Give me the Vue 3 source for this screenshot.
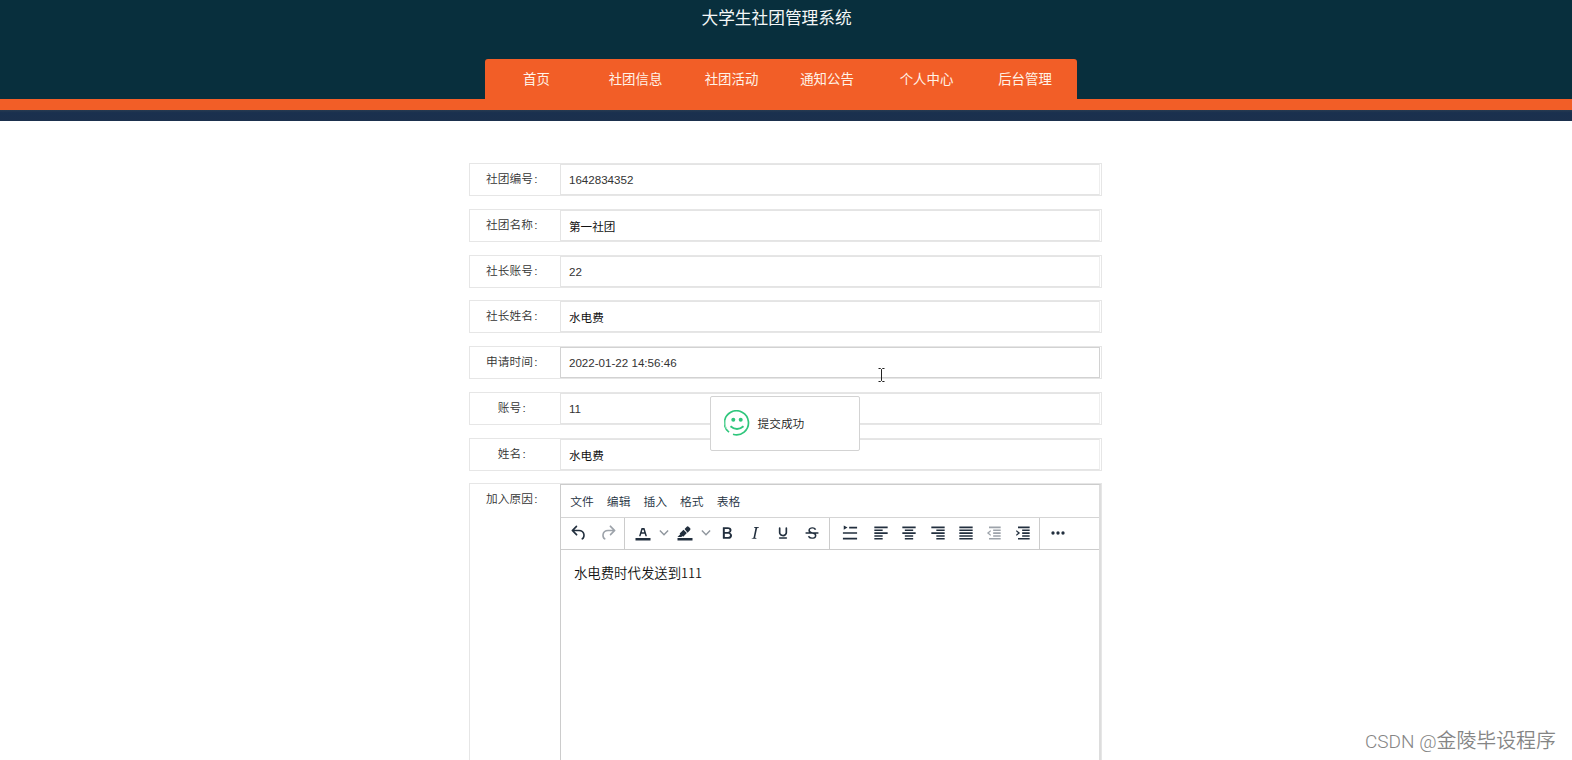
<script setup>
const nav = [
  { t: '首页', w: 103 },
  { t: '社团信息', w: 95 },
  { t: '社团活动', w: 97 },
  { t: '通知公告', w: 94 },
  { t: '个人中心', w: 105 },
  { t: '后台管理', w: 92 },
]
const rows = [
  { l: '社团编号', v: '1642834352' },
  { l: '社团名称', v: '第一社团', cjk: true },
  { l: '社长账号', v: '22' },
  { l: '社长姓名', v: '水电费', cjk: true },
  { l: '申请时间', v: '2022-01-22 14:56:46', hover: true },
  { l: '账号', v: '11' },
  { l: '姓名', v: '水电费', cjk: true },
]
const menus = ['文件', '编辑', '插入', '格式', '表格']
const chevron = 'M3.500 9l5 5 5-5'
const groups = [
  { w: 64, items: [
    { w: 29, d: 'M6.4 8H12c3.7 0 6.2 2 6.8 5.1.6 2.7-.4 5.6-2.3 6.8a1 1 0 01-1-1.8c1.1-.6 1.8-2.7 1.4-4.6-.5-2.1-2.1-3.5-4.9-3.5H6.4l3.3 3.3a1 1 0 11-1.4 1.4l-5-5a1 1 0 010-1.4l5-5a1 1 0 011.4 1.4L6.4 8z' },
    { w: 29, dim: true, d: 'M17.6 10H12c-2.8 0-4.4 1.4-4.9 3.5-.4 2 .3 4 1.4 4.6a1 1 0 11-1 1.8c-2-1.2-2.9-4.1-2.3-6.8.6-3 3-5.1 6.8-5.1h5.6l-3.3-3.3a1 1 0 111.4-1.4l5 5a1 1 0 010 1.4l-5 5a1 1 0 01-1.4-1.4l3.3-3.3z' },
  ] },
  { w: 205, items: [
    { w: 28, d: 'M3 18h18v3H3zM8.7 16h-.8a.5.5 0 01-.5-.6l2.7-9c.1-.3.3-.4.5-.4h2.8c.2 0 .4.1.5.4l2.7 9a.5.5 0 01-.5.6h-.8a.5.5 0 01-.4-.4l-.7-2.2c0-.3-.3-.4-.5-.4h-3.4c-.2 0-.4.1-.5.4l-.7 2.2c0 .3-.2.4-.4.4zm2.6-7.6l-.6 2a.5.5 0 00.5.6h1.6a.5.5 0 00.5-.6l-.6-2c0-.3-.3-.4-.5-.4h-.4c-.2 0-.4.1-.5.4z' },
    { w: 14, line: true, d: chevron },
    { w: 28, d: 'M3 18h18v3H3zM7.7 16.7H3l3.3-3.3-.7-.8L10.2 8l4 4.1-4 4.2c-.2.2-.6.2-.8 0l-.6-.7-1.1 1.1zm3.800-9.500L13.800 4.700a2 2 0 012.800 0L18 6c.7.7.7 2 0 2.7l-2.900 2.900z' },
    { w: 14, line: true, d: chevron },
    { w: 28, d: 'M7.8 19c-.3 0-.5 0-.6-.2l-.2-.5V5.7c0-.2 0-.4.2-.5l.6-.2h5c1.5 0 2.7.3 3.5 1 .7.6 1.1 1.4 1.1 2.5a3 3 0 01-.6 1.9c-.4.6-1 1-1.6 1.2.4.1.9.3 1.3.6s.8.7 1 1.2c.4.4.5 1 .5 1.6 0 1.3-.4 2.3-1.3 3-.8.7-2.1 1-3.8 1H7.8zm5-8.3c.6 0 1.2-.1 1.6-.5.4-.3.6-.7.6-1.3 0-1.1-.8-1.7-2.3-1.7H9.3v3.5h3.4zm.5 6c.7 0 1.3-.1 1.7-.4.4-.4.6-.9.6-1.5s-.2-1-.7-1.4c-.4-.3-1-.4-2-.4H9.4v3.8h4z' },
    { w: 28.4, d: 'M16.7 4.7l-.1.9h-.3c-.6 0-1 0-1.4.3-.3.3-.4.6-.5 1.1l-2.1 9.8v.6c0 .5.4.8 1.4.8h.2l-.2.8H8l.2-.8h.2c1.1 0 1.8-.5 2-1.5l2-9.8.1-.5c0-.6-.4-.8-1.4-.8h-.3l.2-.9h5.8z' },
    { w: 28.3, d: 'M16 5c.6 0 1 .4 1 1v5.5a4 4 0 01-.4 1.8l-1 1.4a5.3 5.3 0 01-5.5 1 5 5 0 01-1.6-1c-.5-.4-.8-.9-1.1-1.4a4 4 0 01-.4-1.8V6c0-.6.4-1 1-1s1 .4 1 1v5.5c0 .3 0 .6.2 1l.6.7a3.3 3.3 0 002.2.8 3.4 3.4 0 002.2-.8c.3-.2.4-.5.6-.8l.2-.9V6c0-.6.4-1 1-1zM8 17h8c.6 0 1 .4 1 1s-.4 1-1 1H8a1 1 0 010-2z' },
    { w: 28.3, solid: true, d: 'M15.6 8.5c-.5-.7-1-1.1-1.3-1.3-.6-.4-1.3-.6-2-.6-2.7 0-2.8 1.7-2.8 2.1 0 1.6 1.8 2 3.2 2.3 4.4.9 4.6 2.8 4.6 3.9 0 1.4-.7 4.1-5 4.1A6.2 6.2 0 017 16.4l1.5-1.1c.4.6 1.6 2 3.7 2 1.6 0 2.500-.4 3-1.2.4-.8.3-2-.8-2.6-.7-.4-1.6-.7-2.9-1-1-.2-3.9-.8-3.9-3.6C7.6 6 10.3 5 12.4 5c2.9 0 4.2 1.6 4.7 2.4l-1.5 1.1zM5 11h14a1 1 0 010 2H5a1 1 0 010-2z' },
  ] },
  { w: 210, items: [
    { w: 33, d: 'M3.500 11h17v2h-17zM3.500 17.800h17v2h-17zM11 4.500h9.500v2H11zM4.500 3l4.500 2.500-4.500 2.500z' },
    { w: 28.3, d: 'M4 4.200h16v2H4zM4 7.800h10v1.800H4zM4 11.200h16v2H4zM4 14.700h10v1.800H4zM4 18h10v1.800H4z' },
    { w: 28.3, d: 'M4 4.200h16v2H4zM7 7.800h10v1.800H7zM4 11.200h16v2H4zM7 14.700h10v1.800H7zM7 18h10v1.800H7z' },
    { w: 28.3, d: 'M4 4.200h16v2H4zM10 7.800h10v1.800H10zM4 11.200h16v2H4zM10 14.700h10v1.800H10zM10 18h10v1.800H10z' },
    { w: 28.3, d: 'M4 4.200h16v2H4zM4 7.800h16v1.800H4zM4 11.200h16v2H4zM4 14.700h16v1.800H4zM4 18h16v1.800H4z' },
    { w: 28.3, dim: true, d: 'M6 4.200h14v2H6zM11 7.800h9v1.800h-9zM11 11.200h9v2h-9zM11 14.700h9v1.800h-9zM6 18h14v1.800H6zM8 8.500v2L5.800 12 8 13.500v2L3.500 12z' },
    { w: 28.3, d: 'M6 4.200h14v2H6zM11 7.800h9v1.800h-9zM11 11.200h9v2h-9zM11 14.700h9v1.800h-9zM6 18h14v1.800H6zM4 8.500v2L6.200 12 4 13.500v2L8.500 12z' },
  ] },
  { w: 40, items: [
    { w: 28, d: 'M6 10a2 2 0 110 4 2 2 0 010-4zM12 10a2 2 0 110 4 2 2 0 010-4zM18 10a2 2 0 110 4 2 2 0 010-4z' },
  ] },
]
</script>

<template>
  <div class="page">
    <header>
      <h1>大学生社团管理系统</h1>
      <nav><a v-for="n in nav" :key="n.t" :style="{ width: n.w + 'px' }">{{ n.t }}</a></nav>
    </header>
    <div class="bar"></div>
    <div class="banner"></div>
    <main>
      <div v-for="r in rows" :key="r.l" class="row">
        <label>{{ r.l }}<i>:</i></label>
        <div class="input" :class="{ hover: r.hover, cjk: r.cjk }">{{ r.v }}</div>
      </div>
      <div class="row tall">
        <label>加入原因<i>:</i></label>
        <div class="editor">
          <div class="menubar"><span v-for="m in menus" :key="m">{{ m }}</span></div>
          <div class="toolbar">
            <div v-for="(g, i) in groups" :key="i" class="group" :style="{ width: g.w + 'px' }">
              <span v-for="(b, j) in g.items" :key="j" class="btn" :style="{ width: b.w + 'px' }">
                <svg :viewBox="b.line ? '0 0 17 24' : '0 0 24 24'" :class="{ dim: b.dim, line: b.line }"><path :d="b.d" :fill-rule="b.solid ? 'nonzero' : 'evenodd'" /></svg>
              </span>
            </div>
          </div>
          <div class="content">水电费时代发送到<span>111</span></div>
        </div>
      </div>
    </main>
    <div class="toast">
      <svg viewBox="0 0 26 26">
        <path d="M5 22.200A12 12 0 1 1 9 24.300" fill="none" stroke="#2fc67c" stroke-width="1.700" />
        <path d="M2.500 19A12 12 0 0 1 1.300 10" fill="none" stroke="#a5e6c5" stroke-width="1" />
        <circle cx="9.300" cy="9.700" r="2" /><circle cx="16.700" cy="9.700" r="2" />
        <path d="M6.500 16.300Q13 21.800 19.500 16.300" fill="none" stroke="#2fc67c" stroke-width="1.800" />
      </svg>
      <span>提交成功</span>
    </div>
    <svg class="cursor" viewBox="0 0 7 14"><path d="M.5 .5H2.500L3.500 1.500 4.500 .5H6.500M3.500 1.500V12.500M.5 13.500H2.500L3.500 12.500 4.500 13.500H6.500" fill="none" stroke="#222" /></svg>
    <div class="mark">CSDN @<span>金陵毕设程序</span></div>
  </div>
</template>

<style>
body { background: #fff; overflow: hidden; }
</style>
<style scoped>
.page { position: relative; width: 1572px; height: 760px; overflow: hidden; background: #fff; font-family: "Liberation Sans", "Noto Sans CJK SC", sans-serif; font-weight: 350; }
header { height: 99px; background: #082f3d; display: flex; flex-direction: column; justify-content: space-between; }
h1 { margin: 0; padding-left: 701.500px; font-size: 16.7px; font-weight: 400; line-height: 38px; color: #f4f7f7; }
nav { margin-left: 485px; width: 592px; height: 40px; box-sizing: border-box; background: #f25e27; border-radius: 3px 3px 0 0; display: flex; }
nav a { color: #fff3e8; font-size: 13.4px; font-weight: 400; line-height: 41px; text-align: center; }
.bar { height: 11px; background: #f25e27; }
.banner { height: 11px; background: linear-gradient(#273a50, #1a304e 25%, #1b304d); }
main { padding: 42px 0 0 469px; }
.row { width: 632.500px; height: 33px; box-sizing: border-box; margin-bottom: 12.750px; border: 1px solid #e6e6e6; display: flex; justify-content: space-between; }
label { width: 90px; box-sizing: border-box; padding-right: 5px; text-align: center; font-size: 11.7px; line-height: 30px; color: #333; }
label i { display: inline-block; width: 6px; font-style: normal; text-align: center; }
.input { width: 540px; box-sizing: border-box; border: 1px solid #e4e4e4; border-right-color: #eee; margin-right: 1px; padding-left: 8px; font-size: 11.6px; line-height: 29px; color: #333; }
.input.cjk { color: #111; font-weight: 400; line-height: 31px; }
.input.hover { border-color: #d2d2d2; }
.row.tall { height: 340px; }
.editor { width: 541px; box-sizing: border-box; border: 1px solid #ccc; border-right-width: 2px; border-right-color: #ddd; }
.menubar { height: 32px; display: flex; gap: 13px; padding-left: 9.300px; font-size: 11.8px; line-height: 34px; color: #222f3e; }
.toolbar { height: 33px; box-sizing: border-box; border-top: 1px solid #d5d5d5; border-bottom: 1px solid #ccc; display: flex; }
.group { box-sizing: border-box; border-right: 1px solid #ccc; display: flex; align-items: center; padding: 0 0 1px 4px; }
.group:last-child { border: 0; }
.btn { display: flex; justify-content: center; flex: none; }
.btn svg { width: 20px; height: 20px; flex: none; fill: #222f3e; }
.btn svg.dim { fill: #9da3aa; }
.btn svg.line { width: 14px; fill: none; stroke: #8f969d; stroke-width: 1.700; }
.content { padding: 12px 13px 0; font-family: "Noto Sans CJK SC", sans-serif; font-size: 13.4px; line-height: 20px; color: #111; }
.content span { font-size: 12.800px; }
.toast { position: absolute; left: 710px; top: 396px; width: 150px; height: 55px; box-sizing: border-box; border: 1px solid #d3d3d3; border-radius: 2px; background: #fff; display: flex; align-items: center; padding: 0 0 2px 12.500px; gap: 8px; font-size: 11.7px; color: #222; }
.toast svg { width: 26px; height: 26px; fill: #2fc67c; }
.cursor { position: absolute; left: 878px; top: 368px; width: 7px; height: 14px; }
.mark { position: absolute; left: 1365px; top: 728px; font-family: Roboto, "Noto Sans CJK SC", sans-serif; font-size: 19px; line-height: 28px; color: #858585; white-space: nowrap; }
.mark span { font-size: 19.900px; }
</style>
